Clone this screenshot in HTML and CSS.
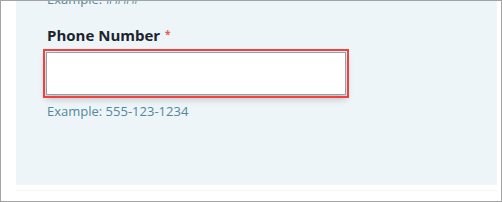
FILE: index.html
```html
<!DOCTYPE html>
<html lang="en">
<head>
    <meta charset="UTF-8">
    <meta name="viewport" content="width=device-width, initial-scale=1">
    <title>Phone Number</title>
    <link rel="stylesheet" href="styles.css">
</head>
<body>
    <div class="frame">
        <div class="panel">
            <p class="hint hint_prev">Example: ####</p>
            <div class="field">
                <label class="label" for="phone">Phone Number <span class="required">*</span></label>
                <input type="text" id="phone" class="input_phone">
                <p class="hint">Example: 555-123-1234</p>
            </div>
        </div>
        <div class="footer_line"></div>
    </div>
</body>
</html>
```

FILE: styles.css
```css
body {
    margin: 0;
    font-family: "Open Sans", "Liberation Sans", sans-serif;
}

.frame {
    width: 502px;
    height: 202px;
    box-sizing: border-box;
    border: 1px solid #a3a3a3;
    padding: 0 4px 0 15px;
    background: #fff;
    overflow: hidden;
}

.panel {
    height: 184px;
    padding-left: 31px;
    background: #eef5f9;
    overflow: hidden;
}

.hint {
    margin: 0;
    font-size: 13px;
    line-height: 18px;
    color: #52889a;
}

.hint_prev {
    margin-top: -11px;
}

.field {
    display: flex;
    flex-direction: column;
    align-items: flex-start;
}

.label {
    margin-top: 17px;
    font-size: 15px;
    font-weight: bold;
    line-height: 20px;
    color: #1b242c;
}

.required {
    position: relative;
    top: -3px;
    margin-left: 1px;
    font-size: 10px;
    color: #ec5a52;
}

.input_phone {
    width: 300px;
    height: 43px;
    margin: 5px 0 0 -1px;
    box-sizing: border-box;
    border: 1px solid #8ea4ac;
    border-radius: 0;
    outline: 2px solid #f43f3f;
    outline-offset: 1px;
    background: #fff;
    box-shadow: 0 4px 7px rgba(0, 0, 0, 0.22);
}

.field .hint {
    margin-top: 7px;
}

.footer_line {
    margin-top: 5px;
    border-top: 1px solid #f5f5f5;
}
```
